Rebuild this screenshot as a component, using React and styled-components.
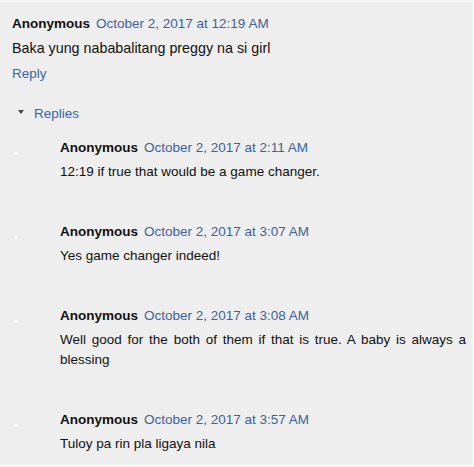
import React from "react";
import styled, { createGlobalStyle } from "styled-components";

const GlobalStyle = createGlobalStyle`
  html, body {
    margin: 0;
    padding: 0;
    background: #efefef;
  }
  body {
    font-family: "Liberation Sans", Arial, sans-serif;
    font-size: 13.5px;
    color: #111;
  }
`;

const Page = styled.div`
  box-sizing: border-box;
  width: 474px;
  height: 467px;
  background: #eeeeee;
  border-top: 2px solid #f6f6f6;
  border-right: 2px solid #f6f6f6;
  border-bottom: 3px solid #f6f6f6;
  padding: 9px 6px 0 12px;
  overflow: hidden;
`;

const Header = styled.div`
  display: flex;
  align-items: center;
  gap: 6px;
  height: 24px;
  white-space: nowrap;
`;

const Author = styled.span`
  font-weight: bold;
  color: #111;
`;

const DateLink = styled.a`
  color: #3d6399;
  text-decoration: none;
`;

const Body = styled.p`
  margin: 3px 0 0;
  line-height: 20px;
  font-size: ${(p) => p.$size || "13.5px"};
  text-align: ${(p) => (p.$justify ? "justify" : "left")};
`;

const ReplyLink = styled.a`
  display: block;
  margin-top: 6px;
  line-height: 20px;
  color: #3a64a8;
  text-decoration: none;
`;

const Toggle = styled.div`
  display: flex;
  align-items: center;
  margin-top: 19px;
  height: 20px;
  color: #3a64a8;
`;

const Caret = styled.span`
  width: 0;
  height: 0;
  margin: 0 10px 3px 6px;
  border-left: 3px solid transparent;
  border-right: 3px solid transparent;
  border-top: 4px solid #444;
`;

const Thread = styled.div`
  margin-top: 12px;
  display: flex;
  flex-direction: column;
  gap: 37px;
`;

const Item = styled.div`
  display: flex;
`;

const Avatar = styled.div`
  flex: 0 0 48px;
  position: relative;
`;

const Dot = styled.span`
  position: absolute;
  left: 2px;
  top: 17px;
  width: 4px;
  height: 3px;
  border-radius: 50%;
  background: #fbfbfb;
`;

const Content = styled.div`
  flex: 1;
`;

const replies = [
  { date: "October 2, 2017 at 2:11 AM", text: "12:19 if true that would be a game changer." },
  { date: "October 2, 2017 at 3:07 AM", text: "Yes game changer indeed!" },
  {
    date: "October 2, 2017 at 3:08 AM",
    text: "Well good for the both of them if that is true. A baby is always a blessing",
  },
  { date: "October 2, 2017 at 3:57 AM", text: "Tuloy pa rin pla ligaya nila" },
];

export default function App() {
  return (
    <>
      <GlobalStyle />
      <Page>
        <Header>
          <Author>Anonymous</Author>
          <DateLink href="#">October 2, 2017 at 12:19 AM</DateLink>
        </Header>
        <Body $size="14.3px">Baka yung nababalitang preggy na si girl</Body>
        <ReplyLink href="#">Reply</ReplyLink>
        <Toggle>
          <Caret />
          Replies
        </Toggle>
        <Thread>
          {replies.map((r) => (
            <Item key={r.date}>
              <Avatar>
                <Dot />
              </Avatar>
              <Content>
                <Header>
                  <Author>Anonymous</Author>
                  <DateLink href="#">{r.date}</DateLink>
                </Header>
                <Body $justify>{r.text}</Body>
              </Content>
            </Item>
          ))}
        </Thread>
      </Page>
    </>
  );
}
